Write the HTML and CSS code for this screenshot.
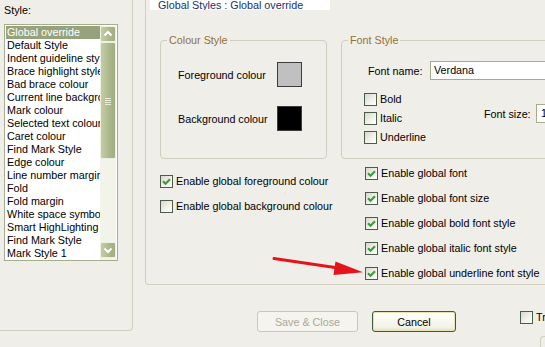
FILE: index.html
```html
<!DOCTYPE html>
<html>
<head>
<meta charset="utf-8">
<link rel="stylesheet" href="styles.css">
</head>
<body>
<div class="dialog">
  <div class="style-group">
    <div class="style-label">Style:</div>
    <div class="listbox">
      <ul class="items">
        <li class="sel">Global override</li>
        <li>Default Style</li>
        <li>Indent guideline style</li>
        <li>Brace highlight style</li>
        <li>Bad brace colour</li>
        <li>Current line background colour</li>
        <li>Mark colour</li>
        <li>Selected text colour</li>
        <li>Caret colour</li>
        <li>Find Mark Style</li>
        <li>Edge colour</li>
        <li>Line number margin</li>
        <li>Fold</li>
        <li>Fold margin</li>
        <li>White space symbol</li>
        <li>Smart HighLighting</li>
        <li>Find Mark Style</li>
        <li>Mark Style 1</li>
      </ul>
      <div class="vscroll">
        <div class="sb-btn"><svg width="14" height="14" viewBox="0 0 14 14"><polyline points="3.5,8.5 7,5 10.5,8.5" fill="none" stroke="#fff" stroke-width="2"/></svg></div>
        <div class="sb-thumb"><svg width="8" height="8" viewBox="0 0 8 8"><path d="M1 1.5H7M1 3.5H7M1 5.5H7M1 7.5H7" stroke="#e6ebd6" stroke-width="1"/></svg></div>
        <div class="sb-track"></div>
        <div class="sb-btn"><svg width="14" height="14" viewBox="0 0 14 14"><polyline points="3.5,5.5 7,9 10.5,5.5" fill="none" stroke="#fff" stroke-width="2"/></svg></div>
      </div>
    </div>
  </div>

  <div class="main">
    <div class="panel">
      <div class="panel-title">Global Styles : Global override</div>
      <div class="panel-body">
        <div class="col col-colour">
          <fieldset class="group">
            <legend>Colour Style</legend>
            <div class="colour-grid">
              <span>Foreground colour</span><span class="swatch fg"></span>
              <span>Background colour</span><span class="swatch bg"></span>
            </div>
          </fieldset>
          <div class="checks checks-left">
            <div class="check"><span class="box"><svg width="11" height="11" viewBox="0 0 11 11"><path d="M2 5.3L4.5 7.8L9 3.2" fill="none" stroke="#3c9c3c" stroke-width="2.2"/></svg></span>Enable global foreground colour</div>
            <div class="check"><span class="box"></span>Enable global background colour</div>
          </div>
        </div>
        <div class="col col-font">
          <fieldset class="group">
            <legend>Font Style</legend>
            <div class="font-name-row">
              <span class="lbl-name">Font name:</span>
              <div class="input input-name">Verdana</div>
            </div>
            <div class="font-row2">
              <div class="style-checks">
                <div class="check"><span class="box"></span>Bold</div>
                <div class="check"><span class="box"></span>Italic</div>
                <div class="check"><span class="box"></span>Underline</div>
              </div>
              <div class="font-size">
                <span class="lbl-size">Font size:</span>
                <div class="input input-size">1</div>
              </div>
            </div>
          </fieldset>
          <div class="checks checks-right">
            <div class="check"><span class="box"><svg width="11" height="11" viewBox="0 0 11 11"><path d="M2 5.3L4.5 7.8L9 3.2" fill="none" stroke="#3c9c3c" stroke-width="2.2"/></svg></span>Enable global font</div>
            <div class="check"><span class="box"><svg width="11" height="11" viewBox="0 0 11 11"><path d="M2 5.3L4.5 7.8L9 3.2" fill="none" stroke="#3c9c3c" stroke-width="2.2"/></svg></span>Enable global font size</div>
            <div class="check"><span class="box"><svg width="11" height="11" viewBox="0 0 11 11"><path d="M2 5.3L4.5 7.8L9 3.2" fill="none" stroke="#3c9c3c" stroke-width="2.2"/></svg></span>Enable global bold font style</div>
            <div class="check"><span class="box"><svg width="11" height="11" viewBox="0 0 11 11"><path d="M2 5.3L4.5 7.8L9 3.2" fill="none" stroke="#3c9c3c" stroke-width="2.2"/></svg></span>Enable global italic font style</div>
            <div class="check"><span class="box"><svg width="11" height="11" viewBox="0 0 11 11"><path d="M2 5.3L4.5 7.8L9 3.2" fill="none" stroke="#3c9c3c" stroke-width="2.2"/></svg></span>Enable global underline font style</div>
          </div>
        </div>
      </div>
    </div>
    <div class="footer">
      <button class="btn btn-disabled" type="button">Save &amp; Close</button>
      <button class="btn btn-default" type="button">Cancel</button>
      <div class="footer-right">
        <div class="check"><span class="box"></span>Transparency</div>
        <div class="corner"></div>
      </div>
    </div>
  </div>

  <svg class="arrow" width="545" height="347" viewBox="0 0 545 347">
    <line x1="274" y1="258.5" x2="340" y2="268.3" stroke="#e3141b" stroke-width="3" stroke-linecap="round"/>
    <polygon points="363,272.3 335.5,261.5 333.5,275" fill="#e3141b"/>
  </svg>
</div>
</body>
</html>
```

FILE: styles.css
```css
* { box-sizing: border-box; }
html, body { margin: 0; padding: 0; }
body {
  width: 545px;
  height: 347px;
  overflow: hidden;
  background: #f0eee8;
  font-family: "Liberation Sans", Arial, sans-serif;
  font-size: 10.75px;
  color: #000;
}
.dialog {
  position: relative;
  display: flex;
  width: 545px;
  height: 347px;
  overflow: hidden;
}

/* left group */
.style-group {
  flex: none;
  width: 133px;
  height: 331px;
  border-right: 1px solid #d0cebf;
  border-bottom: 1px solid #d0cebf;
  border-bottom-right-radius: 4px;
  padding: 3px 0 0 4px;
}
.style-label { height: 14px; line-height: 14px; }
.listbox {
  margin-top: 7px;
  width: 114px;
  height: 237px;
  border: 1px solid #a4ae8c;
  padding: 1px 1px 0 1px;
  display: flex;
  background: #fff;
}
.items {
  list-style: none;
  margin: 0;
  padding: 0;
  width: 94px;
  height: 234px;
  overflow: hidden;
}
.items li {
  height: 13px;
  line-height: 13px;
  padding-left: 1px;
  white-space: nowrap;
}
.items li.sel { background: #96a37a; color: #fff; }

.vscroll {
  width: 16px;
  height: 234px;
  display: flex;
  flex-direction: column;
  background: #f2f4ea;
}
.sb-btn, .sb-thumb {
  border: 1px solid #edf0e2;
  border-radius: 2px;
  background: linear-gradient(to right, #c4cea6, #adb98d 55%, #a0ad7f);
  display: flex;
  align-items: center;
  justify-content: center;
}
.sb-btn { height: 16px; flex: none; }
.sb-thumb { height: 117px; flex: none; }
.sb-track { flex: 1; }
.vscroll .sb-btn:last-child { margin-bottom: 2px; }

/* main */
.main {
  flex: none;
  width: 420px;
  margin-left: 12px;
  display: flex;
  flex-direction: column;
}
.panel {
  height: 285px;
  flex: none;
  border-left: 1px solid #d0cebf;
  border-bottom: 1px solid #d0cebf;
  border-bottom-left-radius: 4px;
}
.panel-title {
  margin-left: 4px;
  width: 180px;
  height: 10px;
  line-height: 10px;
  padding-left: 8px;
  background: #fff;
  color: #20306e;
  white-space: nowrap;
  overflow: hidden;
}
.panel-body {
  display: flex;
  margin-top: 24px;
  padding-left: 14px;
}
.col-colour { flex: none; width: 167px; }
.col-font { flex: none; width: 230px; margin-left: 14px; }

fieldset.group {
  margin: 0;
  padding: 0;
  min-width: 0;
  height: 125px;
  border: 1px solid #d0cebf;
  border-radius: 4px;
}
fieldset.group legend {
  margin-left: 6px;
  padding: 0 2px;
  line-height: 13px;
  color: #93703e;
}
.colour-grid {
  display: grid;
  grid-template-columns: 99px 25px;
  row-gap: 19px;
  align-items: center;
  padding: 15px 0 0 17px;
}
.swatch {
  width: 25px;
  height: 25px;
  border: 1px solid #3c3c3c;
}
.swatch.fg { background: #c0c0c0; }
.swatch.bg { background: #000; }

.font-name-row {
  display: flex;
  align-items: center;
  padding: 14px 0 0 26px;
}
.lbl-name { width: 62px; flex: none; }
.input {
  height: 19px;
  line-height: 17px;
  border: 1px solid #a5ac8e;
  background: #fff;
  padding-left: 3px;
  white-space: nowrap;
}
.input-name { width: 160px; }
.font-row2 { display: flex; margin-top: 13px; }
.style-checks {
  flex: none;
  width: 142px;
  padding-left: 22px;
  display: flex;
  flex-direction: column;
  gap: 6px;
}
.font-size {
  display: flex;
  align-items: center;
  align-self: flex-start;
  margin-top: 11px;
}
.lbl-size { width: 52px; flex: none; }
.input-size { width: 40px; padding-left: 4px; }

.checks { display: flex; flex-direction: column; gap: 12px; }
.checks-left { margin-top: 16px; }
.checks-right { margin-top: 8px; padding-left: 24px; }

.check {
  display: flex;
  align-items: center;
  height: 13px;
  line-height: 13px;
  white-space: nowrap;
}
.box {
  flex: none;
  width: 13px;
  height: 13px;
  margin-right: 3px;
  border: 1px solid #4a5c4c;
  background: linear-gradient(135deg, #d8d7cb, #f1f1ea 55%, #fff);
  display: flex;
}

/* footer */
.footer {
  display: flex;
  align-items: flex-start;
  margin-top: 26px;
  padding-left: 112px;
}
.btn {
  font: inherit;
  height: 21px;
  margin: 0;
  padding: 0;
  border-radius: 3px;
  flex: none;
}
.btn-disabled {
  width: 101px;
  border: 1px solid #cac8bb;
  background: #f5f4ee;
  color: #aca899;
}
.btn-default {
  width: 84px;
  margin-left: 14px;
  border: 1px solid #3e5a36;
  background: linear-gradient(#fffffa, #f4f3e8 80%, #deddc9);
  box-shadow: inset 0 0 0 1px #e7e3b6;
  color: #000;
}
.footer-right {
  margin-left: 64px;
  display: flex;
  flex-direction: column;
}
.corner {
  margin: 12px 0 0 20px;
  width: 40px;
  height: 20px;
  border-top: 1px solid #d0cebf;
  border-left: 1px solid #d0cebf;
  border-top-left-radius: 4px;
}

.arrow {
  position: absolute;
  left: 0;
  top: 0;
  pointer-events: none;
}
```
